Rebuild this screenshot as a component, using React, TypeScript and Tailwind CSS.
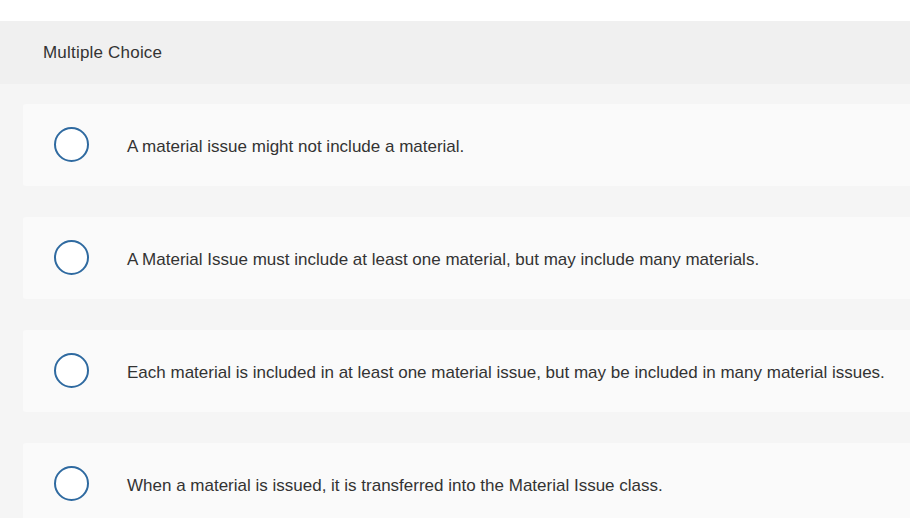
import React from 'react'

const options = [
  'A material issue might not include a material.',
  'A Material Issue must include at least one material, but may include many materials.',
  'Each material is included in at least one material issue, but may be included in many material issues.',
  'When a material is issued, it is transferred into the Material Issue class.',
]

export default function App() {
  return (
    <div className="w-[910px] h-[518px] overflow-hidden bg-white font-['Liberation_Sans',Arial,sans-serif] text-[#333]">
      <div className="h-[21px]" />
      <div className="h-[63px] bg-[#f0f0f0] pl-[43px] flex items-center pt-[1px] text-[17px] tracking-[0.2px]">
        Multiple Choice
      </div>
      <div className="bg-[#f5f5f5] pl-[23px] pt-[20px] flex flex-col gap-[31px] h-[434px]">
        {options.map((text) => (
          <label
            key={text}
            className="h-[82px] shrink-0 bg-[#fafafa] rounded-l-[3px] flex items-center cursor-pointer"
          >
            <span className="ml-[31px] mb-[1px] w-[35px] h-[35px] shrink-0 rounded-full border-2 border-[#2f6aa0] bg-white" />
            <span className="ml-[38px] pt-[4px] text-[17px] whitespace-nowrap">{text}</span>
          </label>
        ))}
      </div>
    </div>
  )
}
